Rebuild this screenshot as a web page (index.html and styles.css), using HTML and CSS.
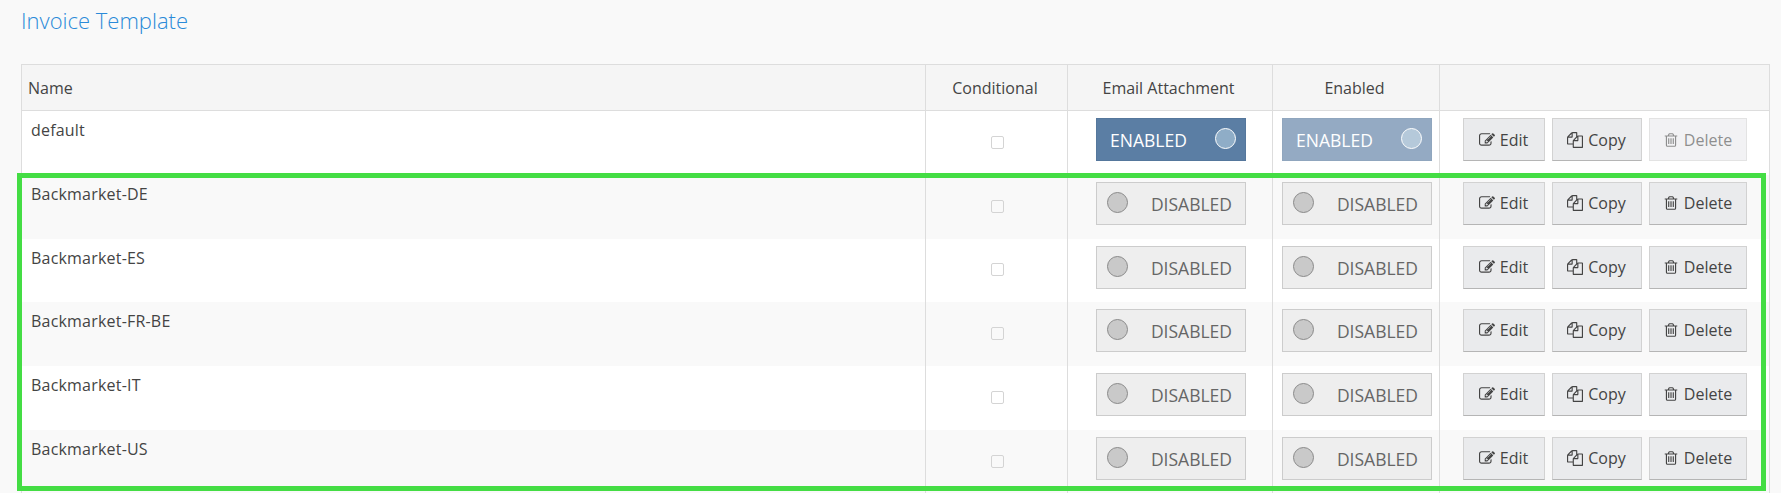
FILE: index.html
```html
<!doctype html>
<html lang="en">
<head>
    <title>Invoice Template</title>
    <meta charset="utf-8" />
    <link rel="stylesheet" href="styles.css">
</head>
<body>
    <!-- Icon set -->
    <svg class="icon-defs" xmlns="http://www.w3.org/2000/svg">
        <symbol id="icon-edit" viewBox="0 0 1792 1792"><path d="M888 1184l116-116-152-152-116 116v56h96v96h56zm440-720q-16-16-33 1l-350 350q-17 17-1 33t33-1l350-350q17-17 1-33zm80 594v190q0 119-84.5 203.5t-203.5 84.5h-832q-119 0-203.5-84.5t-84.5-203.5v-832q0-119 84.5-203.5t203.5-84.5h832q63 0 117 25 15 7 18 23 3 17-9 29l-49 49q-14 14-32 8-23-6-45-6h-832q-66 0-113 47t-47 113v832q0 66 47 113t113 47h832q66 0 113-47t47-113v-126q0-13 9-22l64-64q15-15 35-7t20 29zm-96-738l288 288-672 672h-288v-288zm444 132l-92 92-288-288 92-92q28-28 68-28t68 28l152 152q28 28 28 68t-28 68z"/></symbol>
        <symbol id="icon-copy" viewBox="0 0 1792 1792"><path d="M1696 384q40 0 68 28t28 68v1216q0 40-28 68t-68 28h-960q-40 0-68-28t-28-68v-288h-544q-40 0-68-28t-28-68v-672q0-40 20-88t48-76l408-408q28-28 76-48t88-20h416q40 0 68 28t28 68v328q68-40 128-40h416zm-544 213l-299 299h299v-299zm-640-384l-299 299h299v-299zm196 647l316-316v-416h-384v416q0 40-28 68t-68 28h-416v640h512v-256q0-40 20-88t48-76zm956 804v-1152h-384v416q0 40-28 68t-68 28h-416v640h896z"/></symbol>
        <symbol id="icon-trash" viewBox="0 0 1792 1792"><path d="M704 736v576q0 14-9 23t-23 9h-64q-14 0-23-9t-9-23v-576q0-14 9-23t23-9h64q14 0 23 9t9 23zm256 0v576q0 14-9 23t-23 9h-64q-14 0-23-9t-9-23v-576q0-14 9-23t23-9h64q14 0 23 9t9 23zm256 0v576q0 14-9 23t-23 9h-64q-14 0-23-9t-9-23v-576q0-14 9-23t23-9h64q14 0 23 9t9 23zm128 724v-948h-896v948q0 22 7 40.5t14.5 27 10.5 8.5h832q3 0 10.5-8.5t14.5-27 7-40.5zm-672-1076h448l-48-117q-7-9-17-11h-317q-10 2-17 11zm928 32v64q0 14-9 23t-23 9h-96v948q0 83-47 143.5t-113 60.5h-832q-66 0-113-58.5t-47-141.5v-952h-96q-14 0-23-9t-9-23v-64q0-14 9-23t23-9h309l70-167q15-37 54-63t79-26h320q40 0 79 26t54 63l70 167h309q14 0 23 9t9 23z"/></symbol>
    </svg>

    <h1 class="page-title">Invoice Template</h1>

    <table class="template-table">
        <colgroup>
            <col class="col-name">
            <col class="col-conditional">
            <col class="col-email">
            <col class="col-enabled">
            <col class="col-actions">
        </colgroup>
        <thead>
            <tr>
                <th class="th-name">Name</th>
                <th>Conditional</th>
                <th>Email Attachment</th>
                <th>Enabled</th>
                <th></th>
            </tr>
        </thead>
        <tbody>
            <tr>
                <td class="td-name">default</td>
                <td class="td-check"><input type="checkbox" class="check" disabled></td>
                <td class="td-toggle"><div class="toggle toggle-on"><span>ENABLED</span><i class="knob"></i></div></td>
                <td class="td-toggle"><div class="toggle toggle-on toggle-faded"><span>ENABLED</span><i class="knob"></i></div></td>
                <td>
                    <div class="actions">
                        <button class="btn btn-edit"><svg class="icon"><use href="#icon-edit"/></svg>Edit</button>
                        <button class="btn btn-copy"><svg class="icon"><use href="#icon-copy"/></svg>Copy</button>
                        <button class="btn btn-delete btn-disabled"><svg class="icon"><use href="#icon-trash"/></svg>Delete</button>
                    </div>
                </td>
            </tr>
            <tr>
                <td class="td-name">Backmarket-DE</td>
                <td class="td-check"><input type="checkbox" class="check" disabled></td>
                <td class="td-toggle"><div class="toggle"><i class="knob"></i><span>DISABLED</span></div></td>
                <td class="td-toggle"><div class="toggle"><i class="knob"></i><span>DISABLED</span></div></td>
                <td>
                    <div class="actions">
                        <button class="btn btn-edit"><svg class="icon"><use href="#icon-edit"/></svg>Edit</button>
                        <button class="btn btn-copy"><svg class="icon"><use href="#icon-copy"/></svg>Copy</button>
                        <button class="btn btn-delete"><svg class="icon"><use href="#icon-trash"/></svg>Delete</button>
                    </div>
                </td>
            </tr>
            <tr>
                <td class="td-name">Backmarket-ES</td>
                <td class="td-check"><input type="checkbox" class="check" disabled></td>
                <td class="td-toggle"><div class="toggle"><i class="knob"></i><span>DISABLED</span></div></td>
                <td class="td-toggle"><div class="toggle"><i class="knob"></i><span>DISABLED</span></div></td>
                <td>
                    <div class="actions">
                        <button class="btn btn-edit"><svg class="icon"><use href="#icon-edit"/></svg>Edit</button>
                        <button class="btn btn-copy"><svg class="icon"><use href="#icon-copy"/></svg>Copy</button>
                        <button class="btn btn-delete"><svg class="icon"><use href="#icon-trash"/></svg>Delete</button>
                    </div>
                </td>
            </tr>
            <tr>
                <td class="td-name">Backmarket-FR-BE</td>
                <td class="td-check"><input type="checkbox" class="check" disabled></td>
                <td class="td-toggle"><div class="toggle"><i class="knob"></i><span>DISABLED</span></div></td>
                <td class="td-toggle"><div class="toggle"><i class="knob"></i><span>DISABLED</span></div></td>
                <td>
                    <div class="actions">
                        <button class="btn btn-edit"><svg class="icon"><use href="#icon-edit"/></svg>Edit</button>
                        <button class="btn btn-copy"><svg class="icon"><use href="#icon-copy"/></svg>Copy</button>
                        <button class="btn btn-delete"><svg class="icon"><use href="#icon-trash"/></svg>Delete</button>
                    </div>
                </td>
            </tr>
            <tr>
                <td class="td-name">Backmarket-IT</td>
                <td class="td-check"><input type="checkbox" class="check" disabled></td>
                <td class="td-toggle"><div class="toggle"><i class="knob"></i><span>DISABLED</span></div></td>
                <td class="td-toggle"><div class="toggle"><i class="knob"></i><span>DISABLED</span></div></td>
                <td>
                    <div class="actions">
                        <button class="btn btn-edit"><svg class="icon"><use href="#icon-edit"/></svg>Edit</button>
                        <button class="btn btn-copy"><svg class="icon"><use href="#icon-copy"/></svg>Copy</button>
                        <button class="btn btn-delete"><svg class="icon"><use href="#icon-trash"/></svg>Delete</button>
                    </div>
                </td>
            </tr>
            <tr>
                <td class="td-name">Backmarket-US</td>
                <td class="td-check"><input type="checkbox" class="check" disabled></td>
                <td class="td-toggle"><div class="toggle"><i class="knob"></i><span>DISABLED</span></div></td>
                <td class="td-toggle"><div class="toggle"><i class="knob"></i><span>DISABLED</span></div></td>
                <td>
                    <div class="actions">
                        <button class="btn btn-edit"><svg class="icon"><use href="#icon-edit"/></svg>Edit</button>
                        <button class="btn btn-copy"><svg class="icon"><use href="#icon-copy"/></svg>Copy</button>
                        <button class="btn btn-delete"><svg class="icon"><use href="#icon-trash"/></svg>Delete</button>
                    </div>
                </td>
            </tr>
        </tbody>
    </table>

    <!-- Green highlight drawn over the rows -->
    <div class="highlight"></div>
</body>
</html>
```

FILE: styles.css
```css
html,
body {
    height: 493px;
    overflow: hidden;
}

body {
    margin: 0;
    padding: 0 12px 0 21px;
    position: relative;
    background-color: #f9f9f9;
    font-family: 'Open Sans', sans-serif;
    font-size: 16px;
    color: #444;
}

.icon-defs {
    display: none;
}

.page-title {
    margin: 0;
    padding: 5px 0 0;
    height: 64px;
    box-sizing: border-box;
    font-size: 22px;
    line-height: 30px;
    font-weight: 300;
    color: #2a8ad8;
}

/* Table */
.template-table {
    width: 1748px;
    table-layout: fixed;
    border-collapse: collapse;
    background-color: #fff;
}

.col-name { width: 904px; }
.col-conditional { width: 142px; }
.col-email { width: 205px; }
.col-enabled { width: 167px; }
.col-actions { width: 330px; }

.template-table th {
    height: 46px;
    padding: 0 3px 0 0;
    box-sizing: border-box;
    background-color: #f5f5f5;
    border: 1px solid #ddd;
    font-weight: 400;
    text-align: center;
}

.template-table th.th-name {
    padding: 0 0 0 6px;
    text-align: left;
}

.template-table td {
    height: 64px;
    padding: 7px 0 0;
    box-sizing: border-box;
    border-left: 1px solid #ddd;
    border-right: 1px solid #ddd;
    vertical-align: top;
}

.template-table tbody tr:nth-child(3) td {
    height: 63px;
}

.template-table tbody tr:nth-child(even) td {
    background-color: #f9f9f9;
}

.template-table td.td-name {
    padding: 8px 0 0 9px;
    line-height: 22px;
    letter-spacing: 0.2px;
}

.template-table td.td-check {
    text-align: center;
    vertical-align: middle;
    padding: 0 0 1px 2px;
}

.template-table td.td-toggle {
    padding-left: 2px;
}

.check {
    appearance: none;
    display: block;
    width: 13px;
    height: 13px;
    margin: 0 auto;
    background-color: transparent;
    border: 1px solid #d4d4d4;
    border-radius: 2px;
    box-sizing: border-box;
}

/* Toggle switches */
.toggle {
    display: flex;
    align-items: center;
    justify-content: space-between;
    width: 150px;
    height: 43px;
    margin: 0 auto;
    padding: 0 9px 0 10px;
    box-sizing: border-box;
    background-color: #eee;
    border: 1px solid #ccc;
    font-size: 17.5px;
    color: #666;
}

.toggle .knob {
    width: 21px;
    height: 21px;
    box-sizing: border-box;
    border-radius: 50%;
    border: 1px solid #8a8a8a;
    background-color: #c9c9c9;
    margin-top: -2px;
}

.toggle span {
    margin: 1px 4px 0 0;
}

.toggle-on {
    background-color: #5b7ea4;
    border-color: #55779c;
    color: #fff;
    padding: 0 9px 0 13px;
}

.toggle-on span {
    margin: 0;
}

.toggle-on .knob {
    border: 1px solid #fff;
    background-color: #8fadc7;
}

.toggle-faded {
    opacity: 0.65;
}

/* Action buttons */
.actions {
    display: flex;
    justify-content: center;
    gap: 7px;
}

.btn {
    display: flex;
    align-items: center;
    justify-content: center;
    gap: 5px;
    height: 43px;
    padding: 0;
    box-sizing: border-box;
    background-color: #eaebed;
    border: 1px solid #d2d2d2;
    border-bottom-color: #b5b5b5;
    font-family: inherit;
    font-size: 16px;
    color: #444;
}

.btn-edit { width: 82px; }
.btn-copy { width: 90px; }
.btn-delete { width: 98px; }

.btn-disabled {
    opacity: 0.6;
    border-bottom-color: #d2d2d2;
}

.icon {
    width: 16px;
    height: 16px;
    fill: currentColor;
}

/* Highlight box */
.highlight {
    position: absolute;
    top: 173px;
    left: 17px;
    width: 1749px;
    height: 318px;
    box-sizing: border-box;
    border: 5px solid #44dd44;
}
```
